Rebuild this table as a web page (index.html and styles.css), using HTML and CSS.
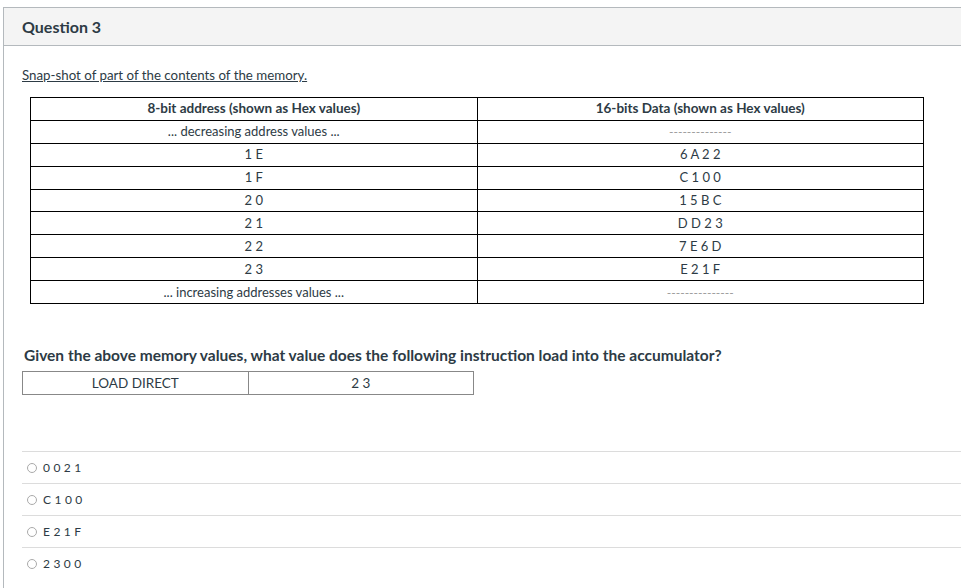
FILE: index.html
```html
<!DOCTYPE html>
<html>
<head>
<meta charset="utf-8">
<link rel="stylesheet" href="styles.css">
</head>
<body>
<div class="question">
  <div class="q-header"><span class="q-title">Question 3</span></div>
  <div class="q-body">
    <p class="snap"><a href="#">Snap-shot of part of the contents of the memory.</a></p>
    <table class="mem">
      <tr><th>8-bit address (shown as Hex values)</th><th>16-bits Data (shown as Hex values)</th></tr>
      <tr><td>... decreasing address values ...</td><td class="dash">--------------</td></tr>
      <tr><td>1 E</td><td>6 A 2 2</td></tr>
      <tr><td>1 F</td><td>C 1 0 0</td></tr>
      <tr><td>2 0</td><td>1 5 B C</td></tr>
      <tr><td>2 1</td><td>D D 2 3</td></tr>
      <tr><td>2 2</td><td>7 E 6 D</td></tr>
      <tr><td>2 3</td><td>E 2 1 F</td></tr>
      <tr><td>... increasing addresses values ...</td><td class="dash">---------------</td></tr>
    </table>
    <p class="prompt">Given the above memory values, what value does the following instruction load into the accumulator?</p>
    <table class="instr">
      <tr><td>LOAD DIRECT</td><td>2 3</td></tr>
    </table>
    <div class="answers">
      <label class="answer"><span class="radio"></span><span class="atext">0 0 2 1</span></label>
      <label class="answer"><span class="radio"></span><span class="atext">C 1 0 0</span></label>
      <label class="answer"><span class="radio"></span><span class="atext">E 2 1 F</span></label>
      <label class="answer"><span class="radio"></span><span class="atext">2 3 0 0</span></label>
    </div>
  </div>
</div>
</body>
</html>
```
FILE: styles.css
```css
html, body {
  margin: 0;
  padding: 0;
  background: #fff;
}
body {
  font-family: Lato, "Open Sans", sans-serif;
  color: #2d3b45;
  overflow: hidden;
}
.question {
  margin: 7px 0 0 3px;
  width: 1000px;
  border: 1px solid #b4b9bd;
  border-right: none;
  border-bottom: none;
  height: 600px;
}
.q-header {
  background: #f4f4f4;
  border-bottom: 1px solid #b4b9bd;
  height: 37px;
  display: flex;
  align-items: center;
  padding-left: 18px;
}
.q-title {
  font-size: 16px;
  font-weight: bold;
  color: #2d3b45;
}
.q-body {
  padding: 0 0 0 18px;
}
.snap {
  margin: 21px 0 14px 0;
  font-size: 13.3px;
  line-height: 16px;
}
.snap a {
  color: #2d3b45;
  text-decoration: underline;
}
.mem {
  border-collapse: collapse;
  margin-left: 8px;
  width: 894px;
  table-layout: fixed;
}
.mem th, .mem td {
  border: 1.5px solid #000;
  height: 21.9px;
  padding: 0;
  text-align: center;
  font-size: 13px;
  line-height: 15px;
}
.mem th {
  font-weight: bold;
  font-size: 13.5px;
  color: #2d3b45;
}
.mem td.dash {
  color: #999;
  font-size: 12px;
}
.prompt {
  margin: 41px 0 6px 2px;
  font-size: 15.5px;
  font-weight: bold;
  line-height: 20px;
  color: #2d3b45;
}
.instr {
  border-collapse: collapse;
  width: 452px;
  table-layout: fixed;
}
.instr td {
  border: 1.5px solid #888;
  height: 22px;
  padding: 0;
  text-align: center;
  font-size: 13.5px;
}
.answers {
  margin-top: 56px;
  display: flex;
  flex-direction: column;
}
.answer {
  display: flex;
  align-items: center;
  border-top: 1px solid #dcdcdc;
  height: 31px;
  padding-left: 5px;
  gap: 6px;
  font-size: 12px;
  letter-spacing: 0.2px;
}
.radio {
  border: 1px solid #aaa;
  border-radius: 50%;
  box-sizing: border-box;
  width: 10px;
  height: 10px;
}
.atext {
  color: #2d3b45;
}
```
